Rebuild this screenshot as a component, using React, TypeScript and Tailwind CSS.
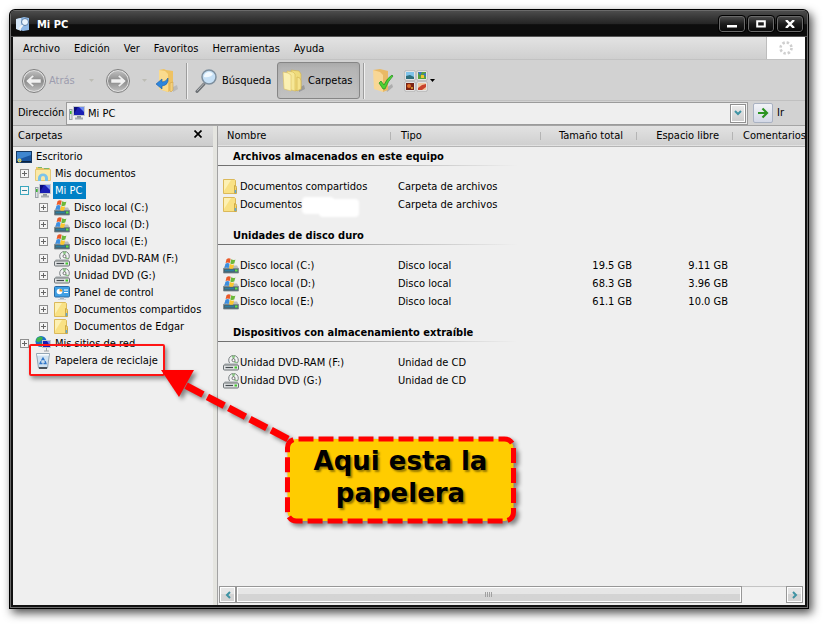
import { ReactNode, useState } from 'react';

type IconName = 'desktop' | 'docs' | 'pc' | 'disk' | 'dvd' | 'panel' | 'folder' | 'network' | 'trash';

interface TreeItem {
  label: string;
  icon: IconName;
  level: 0 | 1 | 2;
  toggle?: 'open' | 'closed';
  marked?: boolean;
}

interface FileRow {
  name: string;
  icon: IconName;
  type: string;
  total?: string;
  free?: string;
  hidden?: boolean;
}

const menus = ['Archivo', 'Edición', 'Ver', 'Favoritos', 'Herramientas', 'Ayuda'];

const tree: TreeItem[] = [
  { label: 'Escritorio', icon: 'desktop', level: 0 },
  { label: 'Mis documentos', icon: 'docs', level: 1, toggle: 'closed' },
  { label: 'Mi PC', icon: 'pc', level: 1, toggle: 'open' },
  { label: 'Disco local (C:)', icon: 'disk', level: 2, toggle: 'closed' },
  { label: 'Disco local (D:)', icon: 'disk', level: 2, toggle: 'closed' },
  { label: 'Disco local (E:)', icon: 'disk', level: 2, toggle: 'closed' },
  { label: 'Unidad DVD-RAM (F:)', icon: 'dvd', level: 2, toggle: 'closed' },
  { label: 'Unidad DVD (G:)', icon: 'dvd', level: 2, toggle: 'closed' },
  { label: 'Panel de control', icon: 'panel', level: 2, toggle: 'closed' },
  { label: 'Documentos compartidos', icon: 'folder', level: 2, toggle: 'closed' },
  { label: 'Documentos de Edgar', icon: 'folder', level: 2, toggle: 'closed' },
  { label: 'Mis sitios de red', icon: 'network', level: 1, toggle: 'closed' },
  { label: 'Papelera de reciclaje', icon: 'trash', level: 1, marked: true },
];

const groups: { title: string; rows: FileRow[] }[] = [
  {
    title: 'Archivos almacenados en este equipo',
    rows: [
      { name: 'Documentos compartidos', icon: 'folder', type: 'Carpeta de archivos' },
      { name: 'Documentos', icon: 'folder', type: 'Carpeta de archivos', hidden: true },
    ],
  },
  {
    title: 'Unidades de disco duro',
    rows: [
      { name: 'Disco local (C:)', icon: 'disk', type: 'Disco local', total: '19.5 GB', free: '9.11 GB' },
      { name: 'Disco local (D:)', icon: 'disk', type: 'Disco local', total: '68.3 GB', free: '3.96 GB' },
      { name: 'Disco local (E:)', icon: 'disk', type: 'Disco local', total: '61.1 GB', free: '10.0 GB' },
    ],
  },
  {
    title: 'Dispositivos con almacenamiento extraíble',
    rows: [
      { name: 'Unidad DVD-RAM (F:)', icon: 'dvd', type: 'Unidad de CD' },
      { name: 'Unidad DVD (G:)', icon: 'dvd', type: 'Unidad de CD' },
    ],
  },
];

const shapes: Record<IconName, ReactNode> = {
  desktop: (
    <>
      <rect x="0.5" y="2.5" width="15" height="11" fill="#1b56a0" stroke="#173a63" />
      <path d="M1 3h14v3L1 11z" fill="#3f86cf" />
      <path d="M1 12.5h14" stroke="#0d2340" />
      <circle cx="3.5" cy="11.5" r="2" fill="#f0d34a" />
      <circle cx="3.5" cy="11.5" r="1" fill="#59b3f0" />
    </>
  ),
  docs: (
    <>
      <path d="M1 1h5l1 1h8v11H1z" fill="#e9c766" />
      <path d="M3 1.5h4M9 2.5h5" stroke="#7cb76b" />
      <path d="M0.5 3.5h15v11H0.5z" fill="#fbe9a6" stroke="#e0bf62" strokeWidth="0.8" />
      <path d="M3 15v-3a5 4.500 0 0 1 10 0v3h-3v-3a2 2 0 0 0-4 0v3z" fill="#7cc4ea" />
    </>
  ),
  pc: (
    <>
      <rect x="0.5" y="4.5" width="2.5" height="10" fill="#dfe3e6" stroke="#9aa2a8" />
      <path d="M1.800 6v3" stroke="#35b52a" strokeWidth="1.500" />
      <rect x="4.5" y="1.5" width="11" height="9" fill="#1a1fb4" stroke="#c3c8cc" />
      <path d="M10 2h5v5z" fill="#6f8cf0" />
      <path d="M5 2h4l-4 7z" fill="#0a0d78" />
      <path d="M8 11h4v2H8z" fill="#8d949a" />
      <path d="M6 13.5h8" stroke="#a4aab0" strokeWidth="2" />
    </>
  ),
  disk: (
    <>
      <path d="M2 7.500h12l2 3.500H0z" fill="#b7bcbf" />
      <path d="M0.500 10.500h15v4.500h-15z" fill="#456673" stroke="#7c868a" strokeWidth="0.8" />
      <path d="M2 12.5h9" stroke="#2c7ea1" strokeWidth="1.500" />
      <path d="M12 12.5h2.500" stroke="#5ee043" strokeWidth="2" />
      <path d="M3.500 1.200q2.200-1.700 4.200-.4L6.700 5Q4.700 3.800 2.600 5z" fill="#ea5a2a" />
      <path d="M8.200 1.200q2.200 1.300 4.200.2L11.300 5.600q-2.200 1-4-.2z" fill="#6cb83a" />
      <path d="M2.400 5.700q2.200-1.200 4.200 0L5.600 10q-2.200-1.200-4.100 0z" fill="#3c8fe0" />
      <path d="M7.100 6q2.200 1.300 4.100.2l-1.100 4.200q-2.200 1-4-.2z" fill="#fbc72e" />
    </>
  ),
  dvd: (
    <>
      <circle cx="10.500" cy="5.200" r="4.800" fill="#f1f3f4" stroke="#7c8183" />
      <path d="M10.500 5 8.500 0.800l4-.2zM10.500 5l4 2.500-2.500 2z" fill="#8cc486" />
      <circle cx="10.500" cy="5.200" r="1.500" fill="#fff" stroke="#666" strokeWidth="0.900" />
      <path d="M2 8h11.500l2 2.500H0.500z" fill="#c4c8ca" />
      <rect x="0.500" y="10" width="15" height="5" rx="1" fill="#e2e4e5" stroke="#6a7073" />
      <path d="M2.500 12.500h7.500" stroke="#444b4f" strokeWidth="1.200" />
      <path d="M11.500 12.500h2.500" stroke="#40c92b" strokeWidth="2" />
    </>
  ),
  panel: (
    <>
      <rect x="0.500" y="1.500" width="15" height="10.500" rx="1" fill="#3f9fe3" stroke="#2a6aa3" />
      <circle cx="5.500" cy="6.500" r="2.800" fill="#fff" />
      <path d="M5.500 6.500V3.700a2.800 2.800 0 0 1 2.800 2.800z" fill="#f39b25" />
      <path d="M10 5h4M10 7.500h4" stroke="#fff" />
      <path d="M6 12h4v2H6z" fill="#a7b6c2" />
      <path d="M4 14.500h8" stroke="#c9d1d8" />
    </>
  ),
  folder: (
    <>
      <path d="M0.500 0.500h11l1 1v13h-12z" fill="#f9e184" stroke="#dbb95a" />
      <path d="M1 1h7L1 12z" fill="#fdf1b4" />
      <path d="M11.500 6.500q2 0 2 2v6h-2z" fill="#f3d571" stroke="#cfab45" />
      <path d="M12.500 11v3" stroke="#60a9dc" strokeWidth="1.500" />
    </>
  ),
  network: (
    <>
      <circle cx="6" cy="5.500" r="5.500" fill="#1b6fc9" />
      <path d="M2 2q4-3 6 0l-2 3-3 1-2-1zM5 7l3 1-1 3q-2 0-2-2z" fill="#3fb54a" />
      <rect x="7.500" y="4.500" width="8" height="7" fill="#1a1fb4" stroke="#c3c8cc" />
      <path d="M12 5h3v5z" fill="#6f8cf0" />
      <path d="M11.500 12v3M9 15h5" stroke="#9ba1a6" />
    </>
  ),
  trash: (
    <>
      <path d="M1.500 0.500h13L12.500 15h-9z" fill="#cfe2f1" stroke="#93a5b3" />
      <path d="M2 1h12v1.500H2z" fill="#f7fbfd" />
      <path d="M4 14h8v2H4z" fill="#4a535a" />
      <path d="M6.500 7.500 8 5l1.500 2.500M10 8l1 2.500H8.500M7.500 10.500H5L6 8.200" fill="none" stroke="#3478c8" strokeWidth="1.300" />
    </>
  ),
};

function Icon({ name }: { name: IconName }) {
  return (
    <svg className="h-4 w-4 shrink-0" viewBox="0 0 16 16" aria-hidden="true">
      {shapes[name]}
    </svg>
  );
}

function Caret({ dim }: { dim?: boolean }) {
  return (
    <svg className="h-[3px] w-[5px] shrink-0" viewBox="0 0 5 3" aria-hidden="true">
      <path d="M0 0h5L2.500 3z" fill={dim ? '#bcbcb4' : '#000'} />
    </svg>
  );
}

function RoundArrow({ back }: { back?: boolean }) {
  return (
    <svg className="h-6 w-6 shrink-0" viewBox="0 0 24 24" aria-hidden="true">
      <defs>
        <linearGradient id={back ? 'ball-back' : 'ball-next'} x1="0" y1="0" x2="0" y2="1">
          <stop offset="0" stopColor="#bdbdbd" />
          <stop offset="0.500" stopColor="#8c8c8c" />
          <stop offset="1" stopColor="#bdbdbd" />
        </linearGradient>
      </defs>
      <circle cx="12" cy="12" r="11.500" fill="#dedede" stroke="#7e7e7e" />
      <circle cx="12" cy="12" r="10" fill={back ? 'url(#ball-back)' : 'url(#ball-next)'} />
      <path
        d={back ? 'M4 12l6.500-6 1.500 1.500L9.500 10H19v4H9.500l2.500 2.500-1.500 1.500z' : 'M20 12l-6.500-6L12 7.500l2.500 2.500H5v4h9.500L12 16.500l1.500 1.500z'}
        fill="#f1f1f1"
        stroke="#8c8c8c"
        strokeWidth="0.500"
      />
    </svg>
  );
}

function UpFolderIcon() {
  return (
    <svg className="h-6 w-6 shrink-0" viewBox="0 0 24 24" aria-hidden="true">
      <path d="M18 18l4-2 1 4-5 3z" fill="#aaa" opacity="0.600" />
      <path d="M4 1l5-1 2 1 7 1v19l-5 2-9-3z" fill="#eec263" />
      <path d="M4 1l6 1 3 3v18l-9-3z" fill="#fadb8e" />
      <path d="M15 14l3-1v8l-2 2-1-1z" fill="#f4d07c" stroke="#cb9a3c" strokeWidth="0.500" />
      <path d="M1 15l6-5v3q4 0 6-4 1 7-6 8v3z" fill="#2d86dd" stroke="#1a5ca6" strokeWidth="0.600" />
    </svg>
  );
}

function SearchIcon() {
  return (
    <svg className="h-6 w-6 shrink-0" viewBox="0 0 24 24" aria-hidden="true">
      <path d="M9 15l-7 7.500" stroke="#6c7074" strokeWidth="3" strokeLinecap="round" />
      <path d="M9 14.500l-6.500 7" stroke="#b9bdc0" strokeWidth="1" strokeLinecap="round" />
      <circle cx="14" cy="8" r="7" fill="#c6e0f6" stroke="#7e8f9e" strokeWidth="1.500" />
      <path d="M9 8a5 5 0 0 1 9-3q-3 4-9 3z" fill="#f3faff" />
    </svg>
  );
}

function FoldersIcon() {
  return (
    <svg className="h-6 w-6 shrink-0" viewBox="0 0 24 24" aria-hidden="true">
      <path d="M17 19l5-3 1 4-6 3z" fill="#777" opacity="0.500" />
      <path d="M9 1l8 1 2 3v15l-6 2z" fill="#efdb7c" stroke="#d0b24e" strokeWidth="0.600" />
      <path d="M5 2l6 1 2 2v17l-7-2z" fill="#f6e796" stroke="#d6b956" strokeWidth="0.600" />
      <path d="M1 3l5 1 3 2v16l-7-2z" fill="#fbf0b2" stroke="#dcc063" strokeWidth="0.600" />
      <path d="M15 8q4 0 4 4v8l-4 2z" fill="#f5e28a" stroke="#cfb04b" strokeWidth="0.600" />
    </svg>
  );
}

function CheckFolderIcon() {
  return (
    <svg className="h-6 w-6 shrink-0" viewBox="0 0 24 24" aria-hidden="true">
      <path d="M14 19l6-4 1 3-6 5z" fill="#888" opacity="0.500" />
      <path d="M1 1l7-1 8 2v19l-5 2z" fill="#e9b965" />
      <path d="M1 1l7 2 3 3v17l-9-3z" fill="#f8d795" />
      <path d="M7 14l2-2 3 4q3-7 8-10l1 1q-5 5-8 13h-2z" fill="#4bd233" stroke="#1f8d1c" strokeWidth="0.700" />
    </svg>
  );
}

function ViewsIcon() {
  return (
    <svg className="h-[22px] w-6 shrink-0" viewBox="0 0 24 22" aria-hidden="true">
      <g fill="#fff" stroke="#8b8b8b" strokeWidth="0.500">
        <path d="M1 1h10v9H1zM13 1h10v9H13zM1 12h10v9H1zM13 12h10v9H13z" />
      </g>
      <path d="M2 2h8v7H2z" fill="#7fc3ea" />
      <path d="M2 6l4-1 4 2v2H2z" fill="#2f6f7c" />
      <path d="M14 2h8v7h-8z" fill="#57a23b" />
      <path d="M14 2h4l-2 4zM19 4l3-1v4z" fill="#3b74c6" />
      <path d="M17 5h3v3h-3z" fill="#f0c530" />
      <path d="M2 13h8v7H2z" fill="#7a2414" />
      <circle cx="5" cy="16" r="2" fill="#e0702a" />
      <circle cx="8" cy="18" r="1" fill="#e9b233" />
      <path d="M14 13h8v7h-8z" fill="#efc9a0" />
      <path d="M14 18l4-3 4-1v3l-4 3h-4z" fill="#c9422b" />
    </svg>
  );
}

function TitleBar() {
  const button =
    'flex h-4 w-[26px] items-center justify-center rounded-[3px] border border-[#6a6a6a] bg-linear-to-b from-[#4a4a4a] via-[#1c1c1c] via-50% to-[#0a0a0a] outline outline-black';
  return (
    <header className="flex h-[26px] items-center border-b border-[#555] bg-linear-to-b from-[#4c4c4c] from-0% via-[#262626] via-50% to-[#0d0d0d] to-55% pr-1 pl-[5px]">
      <svg className="h-4 w-4 shrink-0" viewBox="0 0 16 16" aria-hidden="true">
        <path d="M1 3l7-2 5 1v12l-6 1-6-2z" fill="#8fb8e6" />
        <path d="M0 3l5-1v13l-5-2z" fill="#d3e5f7" />
        <circle cx="9" cy="6" r="3.500" fill="#eaf4fd" stroke="#5c7fa8" />
        <path d="M6.500 9l-3 4" stroke="#f2f4f6" strokeWidth="2" />
      </svg>
      <h1 className="ml-[5px] flex-1 pt-0.5 text-white">Mi PC</h1>
      <div className="flex gap-[3px]">
        <button className={button} aria-label="Minimizar">
          <svg className="h-2 w-[10px]" viewBox="0 0 10 8"><path d="M0 5h10v2.500H0z" fill="#fff" /></svg>
        </button>
        <button className={button} aria-label="Maximizar">
          <svg className="h-2 w-[10px]" viewBox="0 0 10 8"><path d="M1.200 1.200h7.600v5.200H1.200z" fill="none" stroke="#fff" strokeWidth="2" /></svg>
        </button>
        <button className={button} aria-label="Cerrar">
          <svg className="h-2 w-[10px]" viewBox="0 0 10 8"><path d="M1 0l8 8M9 0L1 8" stroke="#fff" strokeWidth="2.400" /></svg>
        </button>
      </div>
    </header>
  );
}

function MenuBar() {
  return (
    <nav className="flex h-[23px] items-stretch border-b border-[#c2c2c2] bg-linear-to-b from-[#e3e3e3] to-[#cfcfcf]">
      <div className="flex flex-1 items-center border-r border-[#bdbdbd] pt-px pl-[3px]">
        {menus.map((menu) => (
          <button key={menu} className="px-[7px]">{menu}</button>
        ))}
      </div>
      <div className="flex w-[38px] items-center justify-center bg-white">
        <svg className="h-[14px] w-[14px]" viewBox="0 0 14 14" aria-hidden="true">
          <circle cx="7" cy="7" r="5.500" fill="none" stroke="#cfcfcf" strokeWidth="2.600" strokeDasharray="2.400 1.920" />
        </svg>
      </div>
    </nav>
  );
}

function Toolbar() {
  return (
    <div className="flex h-[41px] items-center border-b border-[#c0c0c0] bg-[#d2d2d2] pt-px pl-[9px]">
      <button className="flex w-[58px] items-center gap-[3px] text-[#9c9cae]" disabled>
        <RoundArrow back />
        Atrás
      </button>
      <div className="w-[26px] pl-[9px]"><Caret dim /></div>
      <button className="w-9" aria-label="Adelante" disabled><RoundArrow /></button>
      <div className="w-[13px]"><Caret dim /></div>
      <button className="w-[31px]" aria-label="Arriba"><UpFolderIcon /></button>
      <div className="h-9 w-0.5 shrink-0 border-r border-[#f0f0f0] bg-[#9d9d9d]" />
      <button className="flex w-[89px] items-center gap-[3px] pl-[7px]">
        <SearchIcon />
        Búsqueda
      </button>
      <button className="flex h-[37px] w-[83px] shrink-0 items-center gap-0.5 rounded-[3px] border border-[#868686] bg-linear-to-b from-[#b2b2b2] to-[#c2c2c2] pt-px pl-1 inset-shadow-sm">
        <FoldersIcon />
        Carpetas
      </button>
      <div className="ml-[3px] h-9 w-0.5 shrink-0 border-r border-[#f0f0f0] bg-[#9d9d9d]" />
      <button className="ml-[7px] w-8" aria-label="Sincronizar"><CheckFolderIcon /></button>
      <button className="flex items-center gap-0.5" aria-label="Vistas">
        <ViewsIcon />
        <Caret />
      </button>
    </div>
  );
}

function AddressBar() {
  const [address, setAddress] = useState('Mi PC');
  return (
    <form className="flex h-6 items-center bg-[#d2d2d2]" onSubmit={(e) => e.preventDefault()}>
      <label htmlFor="address" className="w-[53px] pl-[5px]">Dirección</label>
      <div className="flex h-[23px] flex-1 items-center border border-[#9b9b9b] bg-[#efefef] pr-px pl-0.5">
        <Icon name="pc" />
        <input
          id="address"
          className="h-4 min-w-0 flex-1 bg-transparent pl-[3px] outline-none"
          value={address}
          onChange={(e) => setAddress(e.target.value)}
        />
        <button type="button" className="flex h-[19px] w-4 items-center justify-center border border-[#8f8f8f] bg-linear-to-b from-[#ececec] to-[#cccccc] inset-ring inset-ring-white" aria-label="Historial">
          <svg className="h-[6px] w-2" viewBox="0 0 8 6"><path d="M1 1l3 3 3-3" fill="none" stroke="#3f93a3" strokeWidth="2" /></svg>
        </button>
      </div>
      <button className="flex w-[57px] items-center gap-1 pl-[5px]">
        <span className="flex h-5 w-5 items-center justify-center rounded-[2px] border border-[#a9b2c2] bg-linear-to-b from-[#f2f3f7] to-[#d3d8e6]">
          <svg className="h-3 w-3" viewBox="0 0 12 12" aria-hidden="true">
            <path d="M1 6h8M5.500 1.500L10 6l-4.500 4.500" fill="none" stroke="#2b9422" strokeWidth="2.200" />
          </svg>
        </span>
        Ir
      </button>
    </form>
  );
}

function Toggle({ open }: { open: boolean }) {
  return (
    <button
      className={`flex h-[9px] w-[9px] shrink-0 items-center justify-center border bg-[#f5f5f5] ${open ? 'border-[#3ba7be]' : 'border-[#8e8e8e]'}`}
      aria-label={open ? 'Contraer' : 'Expandir'}
    >
      <svg className="h-[5px] w-[5px]" viewBox="0 0 5 5">
        <path d={open ? 'M0 2h5v1H0z' : 'M0 2h2V0h1v2h2v1H3v2H2V3H0z'} fill={open ? '#2e7f96' : '#666'} />
      </svg>
    </button>
  );
}

const indents = { 0: 'pl-[3px]', 1: 'pl-[7px]', 2: 'pl-[26px]' };

function FolderTree() {
  const [selected, setSelected] = useState('Mi PC');
  return (
    <aside className="w-[200px] shrink-0">
      <div className="flex h-[21px] items-center justify-between border-b border-[#a9a9a9] bg-linear-to-b from-[#dedede] to-[#cdcdcd] pr-[11px] pl-[5px]">
        <h2>Carpetas</h2>
        <button aria-label="Cerrar panel">
          <svg className="mb-1 h-2 w-2" viewBox="0 0 8 8"><path d="M0.500 0.500l7 7M7.500 0.500l-7 7" stroke="#000" strokeWidth="1.700" /></svg>
        </button>
      </div>
      <ul className="pt-px">
        {tree.map((item) => (
          <li key={item.label} className={`relative flex h-[17px] items-center ${indents[item.level]}`}>
            {item.level > 0 && (
              <span className="w-[15px] shrink-0">{item.toggle && <Toggle open={item.toggle === 'open'} />}</span>
            )}
            <Icon name={item.icon} />
            <button
              className={`ml-0.5 h-[17px] px-0.5 whitespace-nowrap ${selected === item.label ? 'bg-[#0080c6] pr-1 text-white' : ''}`}
              onClick={() => setSelected(item.label)}
            >
              {item.label}
            </button>
            {item.marked && (
              <span className="pointer-events-none absolute -top-2 left-4 h-8 w-[136px] rounded-[2px] border-2 border-[#ff1414] shadow-[2px_3px_4px_rgba(0,0,0,0.400)]" />
            )}
          </li>
        ))}
      </ul>
    </aside>
  );
}

function FileTable() {
  // short tick at the right edge of each column head
  const head = 'bg-[linear-gradient(#b4b4b4,#b4b4b4)] bg-size-[1px_8px] bg-right bg-no-repeat font-normal';
  return (
    <table className="w-full table-fixed border-collapse">
      <thead>
        <tr className="h-5 border-b border-[#b5b5b5] bg-linear-to-b from-[#e2e2e2] to-[#d0d0d0]">
          <th className={`w-[173px] pl-[9px] text-left ${head}`}>Nombre</th>
          <th className={`w-[150px] pl-[10px] text-left ${head}`}>Tipo</th>
          <th className={`w-24 pr-[14px] text-right ${head}`}>Tamaño total</th>
          <th className={`w-24 pr-[14px] text-right ${head}`}>Espacio libre</th>
          <th className="overflow-hidden pl-[10px] text-left font-normal whitespace-nowrap">Comentarios</th>
        </tr>
      </thead>
      {groups.map((group) => (
        <tbody key={group.title}>
          <tr>
            <th colSpan={5} className="pb-3 text-left">
              <div className="h-[18px] pl-[15px] leading-[20px]">{group.title}</div>
              <div className="h-px w-[300px] bg-linear-to-r from-[#6e6e6e] to-transparent" />
            </th>
          </tr>
          {group.rows.map((row) => (
            <tr key={row.name} className="h-[18px]">
              <td className="pl-[5px]">
                <div className="relative flex items-center gap-px whitespace-nowrap">
                  <Icon name={row.icon} />
                  {row.name}
                  {row.hidden && (
                    <>
                      <span className="absolute top-0 left-[79px] h-[17px] w-8 rounded-[4px] bg-white blur-[1px]" />
                      <span className="absolute top-0.5 left-24 h-[18px] w-10 rounded-[4px] bg-white blur-[1px]" />
                    </>
                  )}
                </div>
              </td>
              <td className="pl-[7px]">{row.type}</td>
              <td className="pr-[5px] text-right">{row.total}</td>
              <td className="pr-[5px] text-right">{row.free}</td>
              <td />
            </tr>
          ))}
          <tr className="h-3"><td colSpan={5} /></tr>
        </tbody>
      ))}
    </table>
  );
}

function ScrollBar() {
  const box = 'flex items-center justify-center border border-[#979797] bg-linear-to-b from-[#e6e6e6] from-50% to-[#d4d4d4] to-50% inset-ring inset-ring-white';
  return (
    <div className="mr-0.5 mb-0.5 ml-px flex h-[17px] bg-[#f1f1f1]">
      <button className={`w-[17px] shrink-0 ${box}`} aria-label="Izquierda">
        <svg className="h-2 w-[6px]" viewBox="0 0 6 8"><path d="M5 1L2 4l3 3" fill="none" stroke="#3f93a3" strokeWidth="2" /></svg>
      </button>
      <div className="flex flex-1 border-t border-[#c4c4c4]">
        <div className={`-mt-px w-[92%] ${box}`}>
          <svg className="h-[5px] w-2" viewBox="0 0 8 5"><path d="M0.500 0v5M2.500 0v5M4.500 0v5M6.500 0v5" stroke="#a0a0a0" /></svg>
        </div>
      </div>
      <button className={`w-[17px] shrink-0 ${box}`} aria-label="Derecha">
        <svg className="h-2 w-[6px]" viewBox="0 0 6 8"><path d="M1 1l3 3-3 3" fill="none" stroke="#3f93a3" strokeWidth="2" /></svg>
      </button>
    </div>
  );
}

// Note pinned over the window, with its arrow to the recycle bin
function Callout() {
  return (
    <div className="pointer-events-none absolute top-[240px] left-[144px] h-[164px] w-[366px]">
      <svg className="absolute inset-0 h-full w-full overflow-visible drop-shadow-[3px_3px_2px_rgba(0,0,0,0.450)]" viewBox="0 0 366 164" aria-hidden="true">
        <path d="M131 73L24 17" stroke="#f00" strokeWidth="7" strokeDasharray="19 5" />
        <path d="M4 4h33L22 31z" fill="#f00" />
        <rect x="130.500" y="73" width="226" height="82" rx="9" fill="#fc0" />
        <rect x="130.500" y="73" width="226" height="82" rx="9" fill="none" stroke="#f00" strokeWidth="5" strokeDasharray="15 5" strokeDashoffset="-2" />
      </svg>
      <p className="absolute top-[79px] left-[128px] w-[231px] text-center font-['DejaVu_Sans'] text-[26px] leading-8 font-bold text-shadow-[2px_2px_2px_rgba(0,0,0,0.400)]">
        Aqui esta la papelera
      </p>
    </div>
  );
}

export default function App() {
  return (
    <div className="flex min-h-screen bg-white pt-[9px] pr-[15px] pb-[15px] pl-[9px] font-['DejaVu_Sans_Condensed','DejaVu_Sans',sans-serif] text-[11px] leading-[14px] text-black [&_h1]:font-bold">
      <div className="flex min-w-0 flex-1 rounded-t-[6px] bg-black p-px shadow-[3px_4px_10px_rgba(0,0,0,0.700)]">
        <div className="flex min-w-0 flex-1 rounded-t-[5px] bg-[#6b6b6b] p-px">
          <div className="flex min-w-0 flex-1 flex-col overflow-hidden rounded-t-[4px] bg-[#111]">
            <TitleBar />
            <div className="mx-0.5 mb-0.5 flex flex-1 flex-col bg-[#efefef]">
              <MenuBar />
              <Toolbar />
              <AddressBar />
              <main className="relative flex flex-1 border-t border-[#a5a5a5]">
                <FolderTree />
                <div className="w-1 shrink-0 bg-[#e5e5e0]" />
                <section className="flex min-w-0 flex-1 flex-col border-l border-[#a3a3a3]">
                  <div className="flex-1"><FileTable /></div>
                  <ScrollBar />
                </section>
                <Callout />
              </main>
            </div>
          </div>
        </div>
      </div>
    </div>
  );
}
